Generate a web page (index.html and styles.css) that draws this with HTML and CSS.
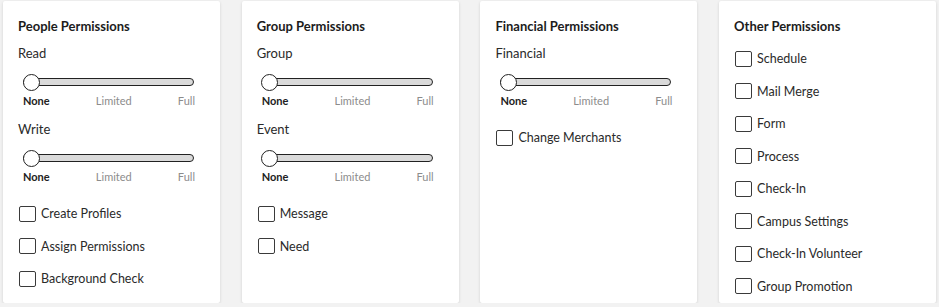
FILE: index.html
```html
<!DOCTYPE html>
<html lang="en">
<head>
    <meta charset="UTF-8">
    <title>Permissions</title>
    <link rel="stylesheet" href="styles.css">
</head>
<body>
    <div class="board">
        <!-- People -->
        <div class="card">
            <h3 class="card-title">People Permissions</h3>
            <div class="field">
                <div class="field-label">Read</div>
                <div class="slider"><span class="knob"></span></div>
                <div class="scale"><b>None</b><span>Limited</span><span>Full</span></div>
            </div>
            <div class="field">
                <div class="field-label">Write</div>
                <div class="slider"><span class="knob"></span></div>
                <div class="scale"><b>None</b><span>Limited</span><span>Full</span></div>
            </div>
            <ul class="checks">
                <li><span class="box"></span>Create Profiles</li>
                <li><span class="box"></span>Assign Permissions</li>
                <li><span class="box"></span>Background Check</li>
            </ul>
        </div>

        <!-- Group -->
        <div class="card">
            <h3 class="card-title">Group Permissions</h3>
            <div class="field">
                <div class="field-label">Group</div>
                <div class="slider"><span class="knob"></span></div>
                <div class="scale"><b>None</b><span>Limited</span><span>Full</span></div>
            </div>
            <div class="field">
                <div class="field-label">Event</div>
                <div class="slider"><span class="knob"></span></div>
                <div class="scale"><b>None</b><span>Limited</span><span>Full</span></div>
            </div>
            <ul class="checks">
                <li><span class="box"></span>Message</li>
                <li><span class="box"></span>Need</li>
            </ul>
        </div>

        <!-- Financial -->
        <div class="card">
            <h3 class="card-title">Financial Permissions</h3>
            <div class="field">
                <div class="field-label">Financial</div>
                <div class="slider"><span class="knob"></span></div>
                <div class="scale"><b>None</b><span>Limited</span><span>Full</span></div>
            </div>
            <ul class="checks">
                <li><span class="box"></span>Change Merchants</li>
            </ul>
        </div>

        <!-- Other -->
        <div class="card">
            <h3 class="card-title">Other Permissions</h3>
            <ul class="checks checks-top">
                <li><span class="box"></span>Schedule</li>
                <li><span class="box"></span>Mail Merge</li>
                <li><span class="box"></span>Form</li>
                <li><span class="box"></span>Process</li>
                <li><span class="box"></span>Check-In</li>
                <li><span class="box"></span>Campus Settings</li>
                <li><span class="box"></span>Check-In Volunteer</li>
                <li><span class="box"></span>Group Promotion</li>
            </ul>
        </div>
    </div>
</body>
</html>
```

FILE: styles.css
```css
* {
    margin: 0;
    padding: 0;
    box-sizing: border-box;
}

body {
    background-color: #f2f2f2;
    font-family: Lato, "Liberation Sans", sans-serif;
    color: #222;
}

/* four cards side by side */
.board {
    display: grid;
    grid-template-columns: repeat(4, 217px);
    column-gap: 21.7px;
    padding: 1px 3px 0;
}

.card {
    background-color: #fff;
    height: 302px;
    padding: 17px 15px 0;
    box-shadow: 0 1px 3px rgba(0, 0, 0, 0.14);
    border-radius: 2px;
}

.card-title {
    font-size: 13px;
    line-height: 16px;
    font-weight: 700;
    color: #1c1c1c;
}

/* slider fields */
.field {
    margin-top: 11px;
}

.field + .field {
    margin-top: 14px;
}

.field-label {
    font-size: 13px;
    line-height: 16px;
    color: #2a2a2a;
}

.slider {
    position: relative;
    width: 171px;
    height: 8px;
    margin: 17px 0 0 5px;
    background-color: #dadada;
    border: 1.5px solid #222;
    border-radius: 4px;
}

.knob {
    position: absolute;
    left: -1.5px;
    top: -5.5px;
    width: 17px;
    height: 17px;
    background-color: #fff;
    border: 1.5px solid #222;
    border-radius: 50%;
}

.scale {
    display: flex;
    justify-content: space-between;
    width: 172px;
    margin: 8px 0 0 5px;
    font-size: 11px;
    line-height: 13px;
    color: #8c8c8c;
}

.scale b {
    color: #222;
    font-weight: 700;
}

/* checkbox rows */
.checks {
    list-style: none;
    margin-top: 22px;
}

.checks-top {
    margin-top: 16px;
}

.checks li {
    display: flex;
    align-items: center;
    height: 17px;
    margin-bottom: 15.5px;
    padding-left: 1px;
    font-size: 12.5px;
    color: #2a2a2a;
}

.box {
    width: 17px;
    height: 16px;
    margin-right: 5px;
    border: 1px solid #3a3a3a;
    border-radius: 2px;
}
```
